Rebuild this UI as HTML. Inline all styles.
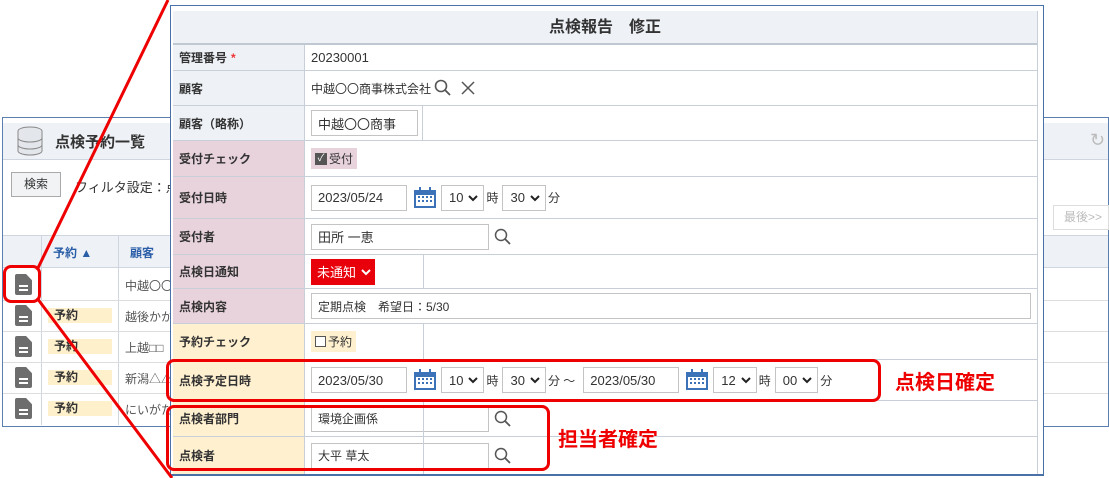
<!DOCTYPE html>
<html><head><meta charset="utf-8"><style>
*{box-sizing:border-box;margin:0;padding:0}
body{width:1109px;height:478px;position:relative;overflow:hidden;background:#fff;font-family:"Liberation Sans","Noto Sans CJK JP",sans-serif;font-size:13px;color:#333}
.a{position:absolute}
.lbl{position:absolute;left:173px;width:132px;font-weight:bold;font-size:12px;padding-left:6px;display:flex;align-items:center;border-bottom:1px solid #c8cfd8;border-right:1px solid #c8cfd8}
.val{position:absolute;left:305px;width:732px;border-bottom:1px solid #c8cfd8;display:flex;align-items:center;padding-left:6px;font-size:12px}
.inp{border:1px solid #c4c4c4;height:26px;display:flex;align-items:center;padding-left:6px;font-size:13px;background:#fff}
.sel{border:1px solid #c4c4c4;height:26px;display:flex;align-items:center;padding:0 5px 0 7px;font-size:13px;margin-left:4px}
.sel svg{margin-left:5px}
.cal{width:24px;height:22px;margin-left:6px}
.u{margin-left:2px;font-size:12px}
.red{position:absolute;border:3px solid #e00;border-radius:8px}
.ann{position:absolute;color:#e00;font-weight:bold;font-size:20px}
.doc{position:absolute;left:15px;width:17px;height:21px;background:#6d6d6d;clip-path:polygon(0 0,65% 0,100% 30%,100% 100%,0 100%);border-radius:2px}
.doc:after{content:"";position:absolute;left:4px;top:11px;width:9px;height:2px;background:#fff;box-shadow:0 4px 0 #fff}
.yk{position:absolute;left:48px;width:64px;height:15px;background:#fff0cc;font-size:12px;font-weight:bold;padding-left:6px;line-height:15px}
</style></head><body>
<div class="a" style="left:2px;top:117px;width:1107px;height:310px;border:1px solid #5a7fb0;background:#fff"></div>
<div class="a" style="left:3px;top:123px;width:1105px;height:37px;background:#eef1f5;border-bottom:1px solid #cfd6df"></div>
<svg class="a" style="left:16px;top:125px" width="28" height="32"><g fill="#e3e6ea" stroke="#888" stroke-width="1"><ellipse cx="14" cy="6" rx="12" ry="4"/><path d="M2 6v20c0 2 5 4 12 4s12-2 12-4V6"/><path d="M2 13c0 2 5 4 12 4s12-2 12-4M2 20c0 2 5 4 12 4s12-2 12-4" fill="none"/></g></svg>
<div class="a" style="left:55px;top:131px;font-size:15px;font-weight:bold">点検予約一覧</div>
<div class="a" style="left:1090px;top:130px;color:#bbb;font-size:18px">↻</div>
<div class="a" style="left:11px;top:172px;width:50px;height:25px;border:1px solid #aaa;background:#f1f3f5;font-size:12px;text-align:center;line-height:23px">検索</div>
<div class="a" style="left:75px;top:177px;font-size:13px">フィルタ設定：点</div>
<div class="a" style="left:1053px;top:205px;width:56px;height:25px;border:1px solid #ddd;color:#bbb;font-size:12px;line-height:23px;padding-left:10px">最後&gt;&gt;</div>
<div class="a" style="left:3px;top:235px;width:1105px;height:33px;background:#eef1f5;border-top:1px solid #cfd6df;border-bottom:1px solid #cfd6df"></div>
<div class="a" style="left:41px;top:235px;width:1px;height:190px;background:#cfd6df"></div>
<div class="a" style="left:118px;top:235px;width:1px;height:190px;background:#cfd6df"></div>
<div class="a" style="left:53px;top:244px;color:#2a5ea8;font-weight:bold;font-size:12px">予約 ▲</div>
<div class="a" style="left:130px;top:244px;color:#2a5ea8;font-weight:bold;font-size:12px">顧客</div>
<div class="a" style="left:3px;top:300px;width:1105px;height:1px;background:#ddd"></div>
<div class="a" style="left:3px;top:331px;width:1105px;height:1px;background:#ddd"></div>
<div class="a" style="left:3px;top:362px;width:1105px;height:1px;background:#ddd"></div>
<div class="a" style="left:3px;top:393px;width:1105px;height:1px;background:#ddd"></div>
<div class="doc" style="top:274px"></div><div class="doc" style="top:305px"></div><div class="doc" style="top:336px"></div><div class="doc" style="top:367px"></div><div class="doc" style="top:398px"></div>
<div class="yk" style="top:308px">予約</div><div class="yk" style="top:339px">予約</div><div class="yk" style="top:370px">予約</div><div class="yk" style="top:401px">予約</div>
<div class="a" style="left:125px;top:277px;font-size:12px;color:#555">中越〇〇</div>
<div class="a" style="left:125px;top:308px;font-size:12px;color:#555">越後かか</div>
<div class="a" style="left:125px;top:339px;font-size:12px;color:#555">上越□□</div>
<div class="a" style="left:125px;top:370px;font-size:12px;color:#555">新潟△△</div>
<div class="a" style="left:125px;top:401px;font-size:12px;color:#555">にいがた</div>

<div class="a" style="left:170px;top:5px;width:874px;height:471px;border:1px solid #4a70a8;border-bottom:2px solid #4a70a8;background:#fff"></div>
<div class="a" style="left:173px;top:11px;width:864px;height:34px;background:#eef2f7;border-bottom:2px solid #c0c8d2;text-align:center;font-size:16px;font-weight:bold;line-height:34px;color:#333">点検報告　修正</div>
<div class="a" style="left:1037px;top:11px;width:1px;height:463px;background:#c8cfd8"></div>

<div class="lbl" style="top:45px;height:26px;background:#eef2f7">管理番号 <span style="color:#e33;margin-left:4px">*</span></div>
<div class="val" style="top:45px;height:26px;font-size:13px">20230001</div>
<div class="lbl" style="top:71px;height:35px;background:#eef2f7">顧客</div>
<div class="val" style="top:71px;height:35px">中越〇〇商事株式会社<svg width="20" height="18" style="margin-left:2px"><circle cx="8" cy="7" r="5.5" fill="none" stroke="#555" stroke-width="1.6"/><path d="M12 11l5 5" stroke="#555" stroke-width="1.8"/></svg><svg width="18" height="18" style="margin-left:6px"><path d="M3 3l12 12M15 3L3 15" stroke="#555" stroke-width="1.5"/></svg></div>
<div class="lbl" style="top:106px;height:35px;background:#eef2f7">顧客（略称）</div>
<div class="val" style="top:106px;height:35px"><div class="inp" style="width:107px">中越〇〇商事</div><div style="width:1px;height:35px;background:#c8cfd8;margin-left:4px"></div></div>
<div class="lbl" style="top:141px;height:36px;background:#e8d3dc">受付チェック</div>
<div class="val" style="top:141px;height:36px"><div style="background:#e8d3dc;padding:2px 4px;font-size:12px;display:flex;align-items:center"><span style="display:inline-block;width:12px;height:12px;background:#555;color:#fff;font-size:10px;line-height:12px;text-align:center;margin-right:2px">✓</span>受付</div></div>
<div class="lbl" style="top:177px;height:42px;background:#e8d3dc">受付日時</div>
<div class="val" style="top:177px;height:42px"><div class="inp" style="width:96px">2023/05/24</div><svg class="cal" viewBox="0 0 24 22"><rect x="1" y="3" width="22" height="18" fill="#3b72b8"/><rect x="3" y="8" width="18" height="11" fill="#fff"/><g fill="#3b72b8"><rect x="5" y="9" width="2" height="2"/><rect x="9" y="9" width="2" height="2"/><rect x="13" y="9" width="2" height="2"/><rect x="17" y="9" width="2" height="2"/><rect x="5" y="13" width="2" height="2"/><rect x="9" y="13" width="2" height="2"/><rect x="13" y="13" width="2" height="2"/><rect x="17" y="13" width="2" height="2"/></g><rect x="6" y="0" width="2" height="5" fill="#3b72b8"/><rect x="16" y="0" width="2" height="5" fill="#3b72b8"/></svg><div class="sel">10<svg width="10" height="8"><path d="M1 2l4 4 4-4" fill="none" stroke="#222" stroke-width="2"/></svg></div><span class="u">時</span><div class="sel">30<svg width="10" height="8"><path d="M1 2l4 4 4-4" fill="none" stroke="#222" stroke-width="2"/></svg></div><span class="u">分</span></div>
<div class="lbl" style="top:219px;height:36px;background:#e8d3dc">受付者</div>
<div class="val" style="top:219px;height:36px"><div class="inp" style="width:178px">田所 一恵</div><svg width="22" height="20" style="margin-left:4px"><circle cx="8" cy="8" r="5.5" fill="none" stroke="#555" stroke-width="1.5"/><path d="M12 12l5 5" stroke="#555" stroke-width="1.8"/></svg></div>
<div class="lbl" style="top:255px;height:34px;background:#e8d3dc">点検日通知</div>
<div class="val" style="top:255px;height:34px"><div style="background:#e8000b;color:#fff;height:26px;width:64px;display:flex;align-items:center;padding-left:6px;font-size:13px">未通知<svg width="10" height="8" style="margin-left:5px"><path d="M1 2l4 4 4-4" fill="none" stroke="#fff" stroke-width="2"/></svg></div></div>
<div class="a" style="left:423px;top:255px;width:1px;height:34px;background:#c8cfd8"></div>
<div class="lbl" style="top:289px;height:35px;background:#e8d3dc">点検内容</div>
<div class="val" style="top:289px;height:35px"><div class="inp" style="width:720px;font-size:12px">定期点検　希望日：5/30</div></div>
<div class="lbl" style="top:324px;height:36px;background:#fff1d0">予約チェック</div>
<div class="val" style="top:324px;height:36px"><div style="background:#fff1d0;padding:2px 4px;font-size:12px;display:flex;align-items:center"><span style="display:inline-block;width:11px;height:11px;border:1px solid #555;background:#fff;margin-right:2px"></span>予約</div></div>
<div class="a" style="left:423px;top:324px;width:1px;height:36px;background:#c8cfd8"></div>
<div class="lbl" style="top:360px;height:41px;background:#fff1d0">点検予定日時</div>
<div class="val" style="top:360px;height:41px"><div class="inp" style="width:96px">2023/05/30</div><svg class="cal" viewBox="0 0 24 22"><rect x="1" y="3" width="22" height="18" fill="#3b72b8"/><rect x="3" y="8" width="18" height="11" fill="#fff"/><g fill="#3b72b8"><rect x="5" y="9" width="2" height="2"/><rect x="9" y="9" width="2" height="2"/><rect x="13" y="9" width="2" height="2"/><rect x="17" y="9" width="2" height="2"/><rect x="5" y="13" width="2" height="2"/><rect x="9" y="13" width="2" height="2"/><rect x="13" y="13" width="2" height="2"/><rect x="17" y="13" width="2" height="2"/></g><rect x="6" y="0" width="2" height="5" fill="#3b72b8"/><rect x="16" y="0" width="2" height="5" fill="#3b72b8"/></svg><div class="sel">10<svg width="10" height="8"><path d="M1 2l4 4 4-4" fill="none" stroke="#222" stroke-width="2"/></svg></div><span class="u">時</span><div class="sel">30<svg width="10" height="8"><path d="M1 2l4 4 4-4" fill="none" stroke="#222" stroke-width="2"/></svg></div><span class="u">分 ～</span><div class="inp" style="width:96px;margin-left:8px">2023/05/30</div><svg class="cal" viewBox="0 0 24 22"><rect x="1" y="3" width="22" height="18" fill="#3b72b8"/><rect x="3" y="8" width="18" height="11" fill="#fff"/><g fill="#3b72b8"><rect x="5" y="9" width="2" height="2"/><rect x="9" y="9" width="2" height="2"/><rect x="13" y="9" width="2" height="2"/><rect x="17" y="9" width="2" height="2"/><rect x="5" y="13" width="2" height="2"/><rect x="9" y="13" width="2" height="2"/><rect x="13" y="13" width="2" height="2"/><rect x="17" y="13" width="2" height="2"/></g><rect x="6" y="0" width="2" height="5" fill="#3b72b8"/><rect x="16" y="0" width="2" height="5" fill="#3b72b8"/></svg><div class="sel">12<svg width="10" height="8"><path d="M1 2l4 4 4-4" fill="none" stroke="#222" stroke-width="2"/></svg></div><span class="u">時</span><div class="sel">00<svg width="10" height="8"><path d="M1 2l4 4 4-4" fill="none" stroke="#222" stroke-width="2"/></svg></div><span class="u">分</span></div>
<div class="lbl" style="top:401px;height:36px;background:#fff1d0">点検者部門</div>
<div class="val" style="top:401px;height:36px"><div class="inp" style="width:178px;font-size:12px">環境企画係</div><svg width="22" height="20" style="margin-left:4px"><circle cx="8" cy="8" r="5.5" fill="none" stroke="#555" stroke-width="1.5"/><path d="M12 12l5 5" stroke="#555" stroke-width="1.8"/></svg></div>
<div class="lbl" style="top:437px;height:37px;background:#fff1d0;border-bottom:none">点検者</div>
<div class="val" style="top:437px;height:37px;border-bottom:none"><div class="inp" style="width:178px;font-size:12px">大平 草太</div><svg width="22" height="20" style="margin-left:4px"><circle cx="8" cy="8" r="5.5" fill="none" stroke="#555" stroke-width="1.5"/><path d="M12 12l5 5" stroke="#555" stroke-width="1.8"/></svg></div>
<div class="a" style="left:423px;top:401px;width:1px;height:73px;background:#c8cfd8"></div>

<svg class="a" style="left:0;top:0" width="200" height="478"><path d="M168 0L37 270M37 298L172 478" stroke="#e00" stroke-width="3"/></svg>
<div class="red" style="left:3px;top:265px;width:38px;height:38px"></div>
<div class="red" style="left:166px;top:359px;width:715px;height:43px"></div>
<div class="red" style="left:166px;top:405px;width:384px;height:66px"></div>
<div class="ann" style="left:895px;top:366px">点検日確定</div>
<div class="ann" style="left:558px;top:423px">担当者確定</div>
</body></html>
